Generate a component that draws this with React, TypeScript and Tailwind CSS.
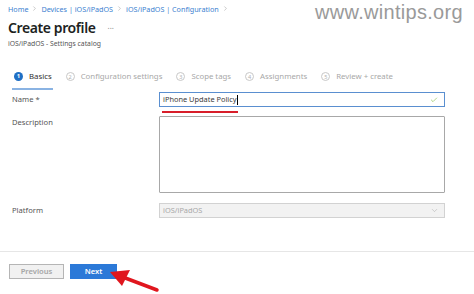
import { ChevronRight, Check, ChevronDown } from 'lucide-react'

const steps = [
    { n: '1', label: 'Basics', active: true },
    { n: '2', label: 'Configuration settings' },
    { n: '3', label: 'Scope tags' },
    { n: '4', label: 'Assignments' },
    { n: '5', label: 'Review + create' },
]

function Crumb({ text }: { text: string }) {
    return (
        <span className="flex items-center">
            <span>{text}</span>
            <ChevronRight className="w-[7px] h-[7px] mx-[3px] text-[#8a8a8a]" strokeWidth={1.5} />
        </span>
    )
}

export default function App() {
    return (
        <div className="relative w-[474px] h-[294px] bg-white overflow-hidden font-['Noto_Sans',sans-serif] text-[#323130]">
            {/* watermark */}
            <div className="absolute left-[315px] top-[-3px] text-[20px] text-[#9a9a9a] font-['Liberation_Sans',sans-serif] tracking-[0.3px]">
                www.wintips.org
            </div>

            {/* breadcrumb */}
            <div className="flex items-center pl-[8px] pt-[3px] h-[15px] text-[7.2px] text-[#3b7fd0]">
                <Crumb text="Home" />
                <Crumb text="Devices | iOS/iPadOS" />
                <Crumb text="iOS/iPadOS | Configuration" />
            </div>

            {/* title */}
            <div className="flex items-center pl-[8px] mt-[2px] h-[22px]">
                <span className="text-[14px] font-semibold text-[#201f1e] leading-none tracking-[-0.4px]">Create profile</span>
                <span className="ml-[12px] text-[8px] text-[#8a8a8a] -mt-[4px]">...</span>
            </div>
            <div className="pl-[8px] text-[6.8px] text-[#555] leading-none mt-[2px]">iOS/iPadOS - Settings catalog</div>

            {/* steps */}
            <div className="flex items-center pl-[14px] mt-[22px] h-[14px] text-[7.8px]">
                {steps.map((s) => (
                    <div key={s.n} className="flex flex-col mr-[14px] relative">
                        <div className="flex items-center">
                            <span
                                className={
                                    s.active
                                        ? 'w-[9px] h-[9px] rounded-full bg-[#1f6fc5] text-white text-[6px] font-bold flex items-center justify-center'
                                        : 'w-[9px] h-[9px] rounded-full border border-[#c8c8c8] text-[#b0b0b0] text-[5.5px] flex items-center justify-center'
                                }
                            >
                                {s.n}
                            </span>
                            <span className={s.active ? 'ml-[6px] text-[#323130]' : 'ml-[6px] text-[#a8a8a8]'}>{s.label}</span>
                        </div>
                        {s.active ? <div className="absolute left-[-2px] right-[-1px] top-[17px] h-[2px] bg-[#8ab3e3]" /> : null}
                    </div>
                ))}
            </div>

            {/* form */}
            <div className="flex flex-col mt-[8px] text-[7.6px] text-[#555]">
                <div className="flex items-center h-[16px]">
                    <div className="w-[159px] pl-[12px]">Name *</div>
                    <div className="relative w-[286px] h-[15px] border border-[#5a8fd0] flex items-center pl-[3px] pr-[6px] text-[7.4px] text-[#3a3a3a]">
                        <span>iPhone Update Policy</span>
                        <span className="w-px h-[10px] bg-black" />
                        <Check className="ml-auto w-[8px] h-[8px] text-[#8cc04e]" strokeWidth={2} />
                        <div className="absolute left-[2px] top-[18px] w-[76px] h-[2px] bg-[#d81e2a]" />
                    </div>
                </div>

                <div className="flex mt-[8px]">
                    <div className="w-[159px] pl-[12px] pt-[1px]">Description</div>
                    <div className="w-[286px] h-[77px] border border-[#a8a8a8] rounded-[1px]" />
                </div>

                <div className="flex items-center mt-[10px] h-[15px]">
                    <div className="w-[159px] pl-[12px]">Platform</div>
                    <div className="w-[286px] h-[15px] border border-[#d2d2d2] bg-[#f2f2f2] flex items-center pl-[3px] pr-[5px] text-[7.4px] text-[#a8a8a8]">
                        <span>iOS/iPadOS</span>
                        <ChevronDown className="ml-auto w-[9px] h-[9px] text-[#b0b0b0]" strokeWidth={1.5} />
                    </div>
                </div>
            </div>

            {/* footer */}
            <div className="mt-[33px] border-t border-[#e6e6e6]" />
            <div className="flex items-center gap-[6px] pl-[9px] mt-[12px] text-[7.6px] font-semibold">
                <button className="w-[55px] h-[15px] border border-[#b5b5b5] bg-[#f1f1f1] text-[#a6a6a6]">Previous</button>
                <button className="w-[47px] h-[15px] bg-[#2b79d8] text-white">Next</button>
            </div>

            {/* red arrow */}
            <svg className="absolute left-[100px] top-[262px]" width="70" height="32" viewBox="0 0 70 32">
                <line x1="57" y1="28" x2="20" y2="14" stroke="#e0161e" strokeWidth="3.5" strokeLinecap="round" />
                <polygon points="10,10 30,8 22,24" fill="#e0161e" />
            </svg>
        </div>
    )
}
